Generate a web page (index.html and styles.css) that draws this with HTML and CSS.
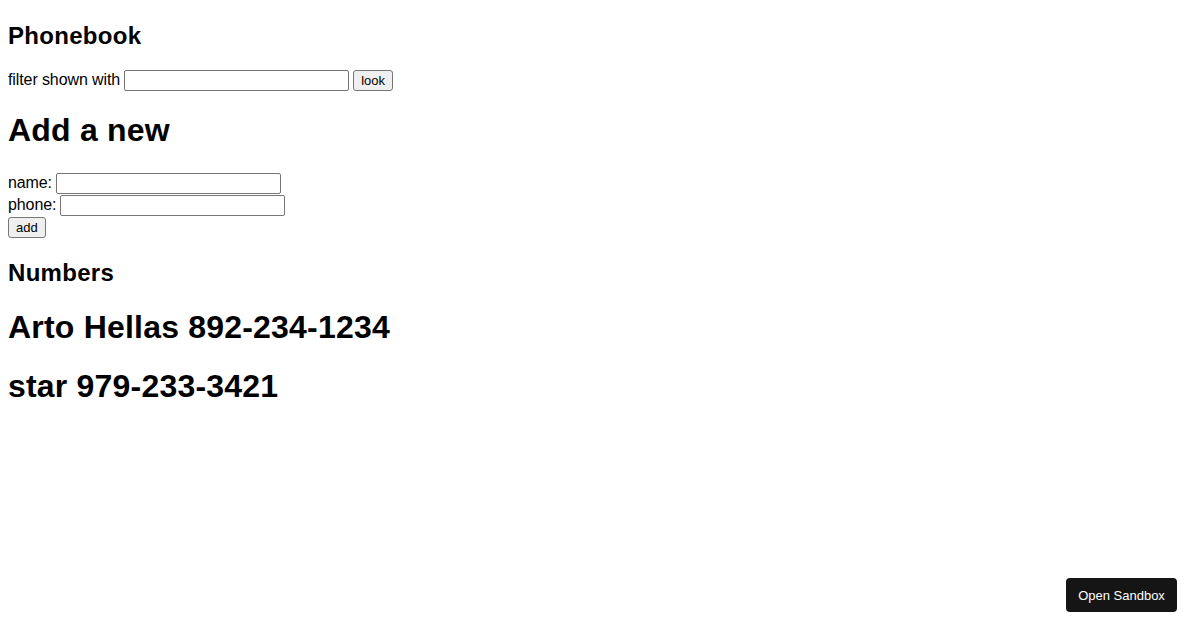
FILE: index.html
```html
<!DOCTYPE html>
<html>
<head>
<meta charset="utf-8">
<title>Phonebook</title>
<link rel="stylesheet" href="styles.css">
</head>
<body>
<div class="app">
  <h2 class="title">Phonebook</h2>
  <div class="row"><span>filter shown with</span><input class="field"><button class="btn" type="button">look</button></div>
  <h1 class="big add-head">Add a new</h1>
  <form class="form">
    <div class="row"><span>name:</span><input class="field"></div>
    <div class="row"><span>phone:</span><input class="field"></div>
    <div class="row"><button class="btn" type="button">add</button></div>
  </form>
  <h2 class="sub">Numbers</h2>
  <h1 class="big">Arto Hellas 892-234-1234</h1>
  <h1 class="big">star 979-233-3421</h1>
</div>
<a class="sandbox" href="#">Open Sandbox</a>
</body>
</html>
```
FILE: styles.css
```css
html, body {
  margin: 0;
  padding: 0;
  background: #fff;
}
body {
  font-family: "Liberation Sans", Arial, sans-serif;
  font-size: 16px;
  color: #000;
}
.app {
  padding: 22px 8px 0;
}
.title {
  margin: 0 0 19px;
  font-size: 24px;
  line-height: 28px;
  letter-spacing: 0.3px;
}
.sub {
  margin: 21px 0 22px;
  font-size: 24px;
  line-height: 28px;
  letter-spacing: 0.3px;
}
.big {
  margin: 22px 0;
  font-size: 32px;
  line-height: 37px;
  letter-spacing: 0.2px;
}
.add-head {
  margin: 21px 0 23px;
}
.form {
  margin: 0;
}
.row {
  display: flex;
  align-items: center;
  gap: 4px;
  height: 22px;
  letter-spacing: -0.1px;
}
.field {
  font-family: "Liberation Sans", Arial, sans-serif;
  font-size: 13px;
  width: 225px;
  height: 21px;
  box-sizing: border-box;
  margin: 0;
  padding: 1px 2px;
  border: 1px solid #767676;
  border-radius: 2px;
  letter-spacing: 0;
}
.btn {
  font-family: "Liberation Sans", Arial, sans-serif;
  font-size: 13px;
  height: 21px;
  box-sizing: border-box;
  margin: 0;
  padding: 1px 7px;
  border: 1px solid #767676;
  border-radius: 3px;
  background: #efefef;
  color: #000;
  letter-spacing: 0;
}
.sandbox {
  position: fixed;
  right: 23px;
  bottom: 18px;
  width: 111px;
  height: 34px;
  box-sizing: border-box;
  display: flex;
  align-items: center;
  justify-content: center;
  background: #151515;
  color: #fff;
  border-radius: 4px;
  font-size: 13px;
  text-decoration: none;
  font-family: "Liberation Sans", Arial, sans-serif;
}
```
